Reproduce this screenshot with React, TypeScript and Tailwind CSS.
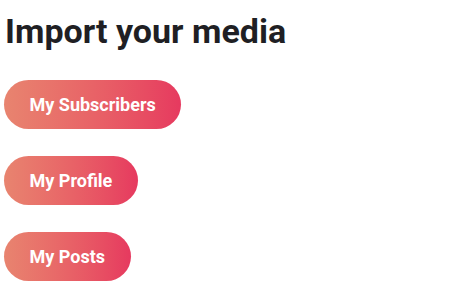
export default function App() {
  const items = ["My Subscribers", "My Profile", "My Posts"];
  return (
    <div className="min-h-screen bg-white px-[4px] pt-[11px]" style={{ fontFamily: "Roboto, 'Noto Sans', sans-serif" }}>
      <h1 className="ml-[1px] text-[34px] font-bold leading-[40px] text-[#1f1f24]">Import your media</h1>
      <div className="mt-[29px] flex flex-col items-start gap-[27px]">
        {items.map((t) => (
          <button
            key={t}
            className="h-[49px] rounded-full bg-gradient-to-r from-[#e8846f] to-[#e6395f] px-[25.5px] text-[18px] font-bold text-white"
          >
            {t}
          </button>
        ))}
      </div>
    </div>
  );
}
